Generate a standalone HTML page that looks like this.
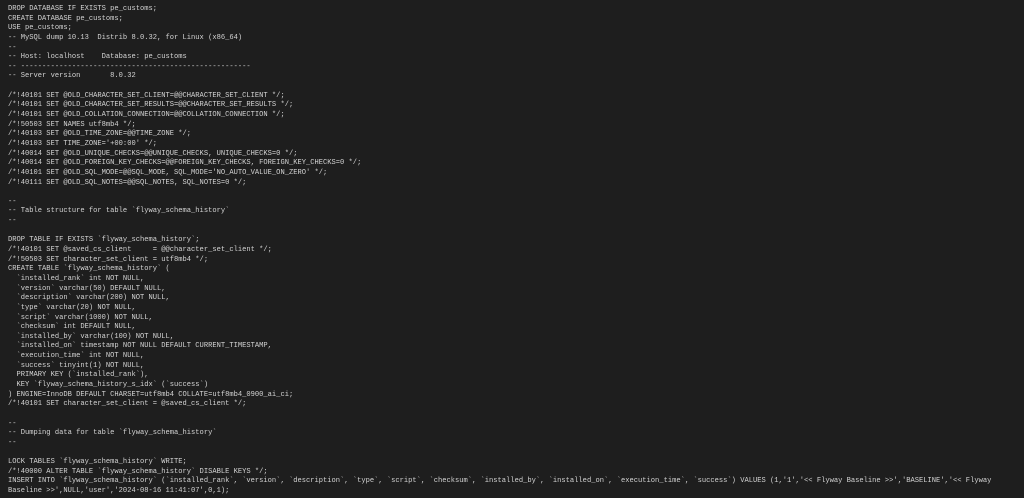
<!DOCTYPE html>
<html><head><meta charset="utf-8"><style>
html,body{margin:0;padding:0;background:#1e1e1e;width:1024px;height:498px;overflow:hidden}
pre{margin:0;padding:5px 0 0 8px;font-family:"Liberation Mono",monospace;font-size:7.1px;line-height:9.64px;color:#d4d4d4;white-space:pre}
</style></head><body><pre>DROP DATABASE IF EXISTS pe_customs;
CREATE DATABASE pe_customs;
USE pe_customs;
-- MySQL dump 10.13  Distrib 8.0.32, for Linux (x86_64)
--
-- Host: localhost    Database: pe_customs
-- ------------------------------------------------------
-- Server version	8.0.32

/*!40101 SET @OLD_CHARACTER_SET_CLIENT=@@CHARACTER_SET_CLIENT */;
/*!40101 SET @OLD_CHARACTER_SET_RESULTS=@@CHARACTER_SET_RESULTS */;
/*!40101 SET @OLD_COLLATION_CONNECTION=@@COLLATION_CONNECTION */;
/*!50503 SET NAMES utf8mb4 */;
/*!40103 SET @OLD_TIME_ZONE=@@TIME_ZONE */;
/*!40103 SET TIME_ZONE='+00:00' */;
/*!40014 SET @OLD_UNIQUE_CHECKS=@@UNIQUE_CHECKS, UNIQUE_CHECKS=0 */;
/*!40014 SET @OLD_FOREIGN_KEY_CHECKS=@@FOREIGN_KEY_CHECKS, FOREIGN_KEY_CHECKS=0 */;
/*!40101 SET @OLD_SQL_MODE=@@SQL_MODE, SQL_MODE='NO_AUTO_VALUE_ON_ZERO' */;
/*!40111 SET @OLD_SQL_NOTES=@@SQL_NOTES, SQL_NOTES=0 */;

--
-- Table structure for table `flyway_schema_history`
--

DROP TABLE IF EXISTS `flyway_schema_history`;
/*!40101 SET @saved_cs_client     = @@character_set_client */;
/*!50503 SET character_set_client = utf8mb4 */;
CREATE TABLE `flyway_schema_history` (
  `installed_rank` int NOT NULL,
  `version` varchar(50) DEFAULT NULL,
  `description` varchar(200) NOT NULL,
  `type` varchar(20) NOT NULL,
  `script` varchar(1000) NOT NULL,
  `checksum` int DEFAULT NULL,
  `installed_by` varchar(100) NOT NULL,
  `installed_on` timestamp NOT NULL DEFAULT CURRENT_TIMESTAMP,
  `execution_time` int NOT NULL,
  `success` tinyint(1) NOT NULL,
  PRIMARY KEY (`installed_rank`),
  KEY `flyway_schema_history_s_idx` (`success`)
) ENGINE=InnoDB DEFAULT CHARSET=utf8mb4 COLLATE=utf8mb4_0900_ai_ci;
/*!40101 SET character_set_client = @saved_cs_client */;

--
-- Dumping data for table `flyway_schema_history`
--

LOCK TABLES `flyway_schema_history` WRITE;
/*!40000 ALTER TABLE `flyway_schema_history` DISABLE KEYS */;
INSERT INTO `flyway_schema_history` (`installed_rank`, `version`, `description`, `type`, `script`, `checksum`, `installed_by`, `installed_on`, `execution_time`, `success`) VALUES (1,'1','&lt;&lt; Flyway Baseline &gt;&gt;','BASELINE','&lt;&lt; Flyway
Baseline &gt;&gt;',NULL,'user','2024-08-16 11:41:07',0,1);</pre></body></html>
